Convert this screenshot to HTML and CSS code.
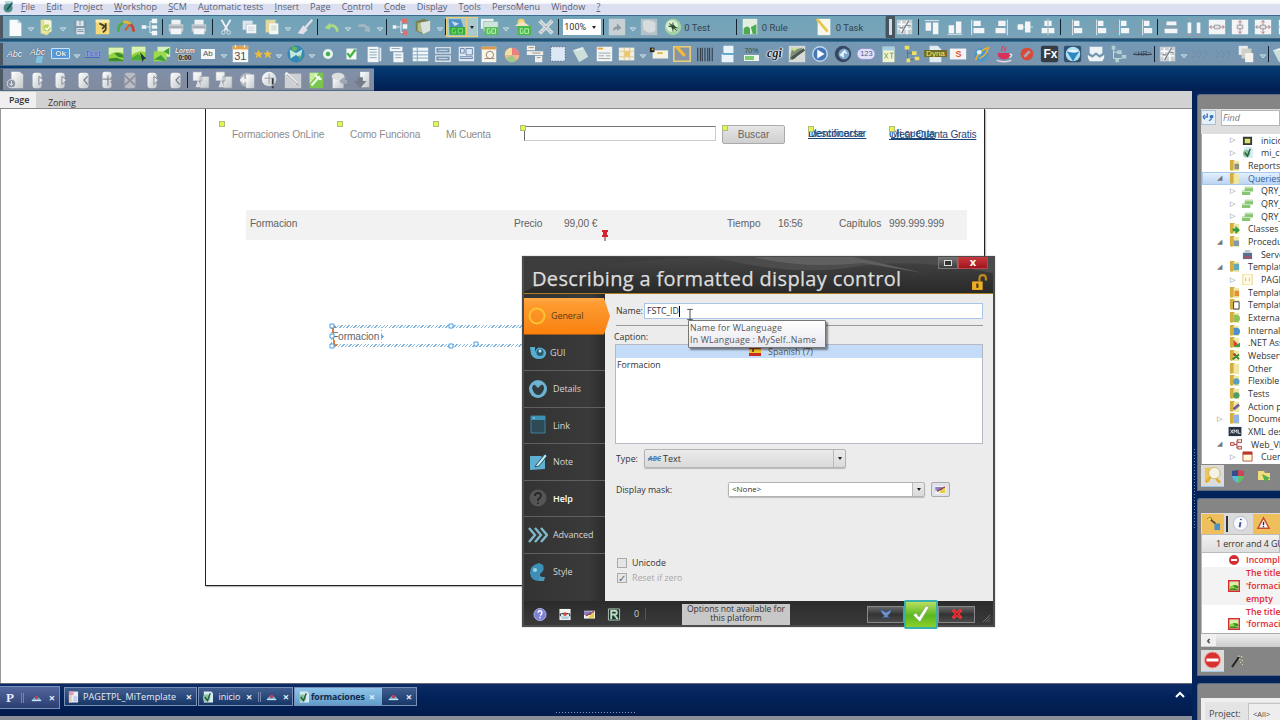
FILE: index.html
```html
<!DOCTYPE html>
<html lang="en">
<head>
<meta charset="utf-8">
<title>Page editor</title>
<link rel="stylesheet" href="styles.css">
</head>
<body>
<svg class="sprite" aria-hidden="true">
<defs>
<linearGradient id="gw" x1="0" y1="0" x2="1" y2="1"><stop offset="0" stop-color="#fff"/><stop offset="1" stop-color="#c3c8cc"/></linearGradient>
</defs>
<symbol id="new" viewBox="0 0 22 22"><path d="M5 3h9l4 4v14H5z" fill="#f7fbfd"/><path d="M14 3v4h4z" fill="#bcd0da"/></symbol>
<symbol id="open" viewBox="0 0 22 22"><path d="M4 3h11v13l-4 4-7-2z" fill="#e9df91"/><path d="M8 3l8 1v12l-8 1z" fill="#f3f5dd"/><circle cx="11" cy="12" r="4" fill="#b7d35d"/><path d="M9 12l2 2 4-5" stroke="#fff" stroke-width="1.5" fill="none"/></symbol>
<symbol id="save" viewBox="0 0 22 22"><path d="M4 4h14v14H4z" fill="#7c97aa"/><path d="M7 4h8v6H7zM7 12h9v7H7z" fill="#dce6ec"/><path d="M11 4v5M8 14h7M8 16h7" stroke="#7991a1"/></symbol>
<symbol id="proj" viewBox="0 0 22 22"><path d="M3 3h15v16H3z" fill="#f4d976"/><path d="M3 3h15v3H3z" fill="#f9efb4"/><path d="M7 7l6 3-3 3M14 7v7l-3 3" stroke="#47412b" stroke-width="2" fill="none"/></symbol>
<symbol id="gauge" viewBox="0 0 22 22"><path d="M3 16a8 8 0 0 1 5-10" stroke="#54a947" stroke-width="3" fill="none"/><path d="M8 6q4-2 8 2" stroke="#e0b83c" stroke-width="3" fill="none"/><path d="M16 8q4 4 3 8" stroke="#c94334" stroke-width="3" fill="none"/><path d="M10 15l5-7" stroke="#d15b2d" stroke-width="2"/></symbol>
<symbol id="org" viewBox="0 0 22 22"><path d="M8 11h4M12 5v12M12 5h3M12 17h3" stroke="#e6f0f5" fill="none"/><path d="M3 9h5v4H3zM14 2h6v5h-6zM14 9h6v4h-6zM14 15h6v5h-6z" fill="#f2f7fa"/></symbol>
<symbol id="print" viewBox="0 0 22 22"><path d="M6 3h10v6H6z" fill="#eef1f3"/><path d="M3 8h16v8H3z" fill="#c3cbd0"/><path d="M5 13h12v6H5z" fill="#f2f4f5"/><path d="M4 11h14" stroke="#84919a"/></symbol>
<symbol id="cut" viewBox="0 0 22 22"><path d="M6 3l7 12M16 3L9 15" stroke="#eef2f4" stroke-width="2"/><circle cx="8" cy="17" r="2" fill="none" stroke="#dbe3e7"/><circle cx="14" cy="17" r="2" fill="none" stroke="#dbe3e7"/></symbol>
<symbol id="copy" viewBox="0 0 22 22"><path d="M4 4h11v10H4z" fill="#dce6ec"/><path d="M8 8h11v10H8z" fill="#f7fafb" stroke="#9fb3bf" stroke-width=".6"/><path d="M10 11h7M10 13h7M10 15h7" stroke="#b8c7d0" stroke-width=".8"/></symbol>
<symbol id="paste" viewBox="0 0 22 22"><path d="M4 3h11v14H4z" fill="#e1d99d"/><path d="M8 7h10v12H8z" fill="#f5f7f3"/><path d="M10 10h6M10 12h6M10 14h6" stroke="#bcc7bc" stroke-width=".8"/></symbol>
<symbol id="brush" viewBox="0 0 22 22"><path d="M19 3l-8 9" stroke="#e6e0e6" stroke-width="2.5"/><path d="M9 9l5 5-5 5-6-1z" fill="#e3dfe8"/></symbol>
<symbol id="undo" viewBox="0 0 22 22"><path d="M17 16q-1-8-9-6" stroke="#a9dc80" stroke-width="3" fill="none"/><path d="M3 12l6-6v8z" fill="#a9dc80"/></symbol>
<symbol id="redo" viewBox="0 0 22 22"><path d="M5 10q8-3 10 4" stroke="#a3b7c3" stroke-width="3" fill="none"/><path d="M18 17l-7-2 6-5z" fill="#a3b7c3"/></symbol>
<symbol id="tree" viewBox="0 0 22 22"><path d="M7 11h5M12 5v12h3M12 5h3" stroke="#eef" fill="none"/><path d="M3 9h4v4H3zM14 8h5v5h-5z" fill="#f2f4f6"/><path d="M13 2h6v5h-6zM14 15h5v5h-5z" fill="#df6f68"/></symbol>
<symbol id="box" viewBox="0 0 22 22"><path d="M3 5l9-3 7 3v10l-8 4-8-4z" fill="#73814d"/><path d="M5 6l6 2v10l-6-3z" fill="#b5bd91"/><path d="M8 6l11-2v11l-8 4z" fill="#dae2df"/></symbol>
<symbol id="go" viewBox="0 0 22 22"><path d="M2 2h14l3 9-5 4H3z" fill="#4e91c6"/><path d="M5 4l9 3-5 3z" fill="#c2def3"/><path d="M3 11h18v9H3z" fill="#2fab36"/><path d="M10 13H6v5h4v-3M13 13h5v5h-5z" stroke="#8be588" fill="none"/></symbol>
<symbol id="gow" viewBox="0 0 22 22"><path d="M1 2h14v11H1z" fill="#e6f0f1"/><path d="M4 5h16v11H4z" fill="#cfe3dc" stroke="#80b3a4" stroke-width=".6"/><path d="M5 11h15v9H5z" fill="#58bd59"/><path d="M11 13H8v5h3v-3M13 13h4v5h-4z" stroke="#c4f3bd" fill="none"/></symbol>
<symbol id="goh" viewBox="0 0 22 22"><circle cx="9" cy="6" r="4" fill="#f1d36c"/><path d="M2 10l8-6 8 6" fill="#eee4c0"/><path d="M5 10h15v10H5z" fill="#47ba47"/><path d="M11 13H8v5h3v-3M13 13h4v5h-4z" stroke="#c4f3bd" fill="none"/></symbol>
<symbol id="x" viewBox="0 0 22 22"><path d="M4 4l14 14M18 4L4 18" stroke="#d5dadd" stroke-width="4.500"/><path d="M4 4l14 14M18 4L4 18" stroke="#90a5b0" stroke-width="1" stroke-dasharray="2"/></symbol>
<symbol id="gbox" viewBox="0 0 22 22"><rect x="2" y="2" width="18" height="18" rx="1" fill="#c7d0d5"/><path d="M7 15v-3l4-2V7l5 5-5 3v-2z" fill="#8e9b9f"/></symbol>
<symbol id="gcirc" viewBox="0 0 22 22"><path d="M2 2h18v18H2z" fill="#b3c1c9"/><path d="M4 5q6-4 14 1v9q-6 5-13-1z" fill="#d7dcde"/></symbol>
<symbol id="test" viewBox="0 0 22 22"><circle cx="11" cy="11" r="9" fill="#a3d3a3"/><circle cx="10" cy="10" r="6.500" fill="#dff0da"/><path d="M11 6v10M6 10l10 2M7 7l8 8" stroke="#345b36" stroke-width="1.200"/><path d="M9 8l5 2-4 4z" fill="#294d2e"/></symbol>
<symbol id="rule" viewBox="0 0 22 22"><path d="M3 2h16v17H3z" fill="#e2eee0"/><path d="M4 13q4-5 7 0v6H4zM12 11l6-3v11h-4z" fill="#4cab51"/></symbol>
<symbol id="task" viewBox="0 0 22 22"><path d="M4 2h14v18H4z" fill="#f8f7ed"/><path d="M3 2l12 14" stroke="#e8c64d" stroke-width="3"/></symbol>
<symbol id="grid" viewBox="0 0 22 22"><path d="M2 3h17v16H2z" fill="#c9d0d5"/><path d="M3 8h15M3 13h15M7 4v15M13 4v15" stroke="#fff" stroke-width="1.500"/><path d="M7 18L15 4M5 12h4M12 9h5" stroke="#777f87" stroke-width="1.200"/></symbol>
<symbol id="at" viewBox="0 0 22 22"><path d="M3 4h16" stroke="#e8eef2"/><path d="M4 6h6v9H4zM12 6h6v13h-6z" fill="#f3f5f7"/></symbol>
<symbol id="ab" viewBox="0 0 22 22"><path d="M3 19h16" stroke="#e8eef2"/><path d="M4 9h6v9H4zM12 5h6v13h-6z" fill="#f3f5f7"/></symbol>
<symbol id="al" viewBox="0 0 22 22"><path d="M4 3v17" stroke="#e8eef2"/><path d="M6 4h8v6H6zM6 12h12v6H6z" fill="#f3f5f7"/></symbol>
<symbol id="ar" viewBox="0 0 22 22"><path d="M18 3v17" stroke="#e8eef2"/><path d="M8 4h8v6H8zM5 12h11v6H5z" fill="#f3f5f7"/></symbol>
<symbol id="ac" viewBox="0 0 22 22"><path d="M2 11h18" stroke="#d8e1e7"/><path d="M3 8h6v6H3zM11 5h6v12h-6z" fill="#f3f5f7"/></symbol>
<symbol id="am" viewBox="0 0 22 22"><path d="M11 2v18" stroke="#d8e1e7"/><path d="M7 4h8v6H7zM4 12h14v6H4z" fill="#f3f5f7"/><path d="M11 3v16" stroke="#9aa9b4"/></symbol>
<symbol id="as" viewBox="0 0 22 22"><path d="M3 5h5M3 10h5M3 16h5" stroke="#a78d93" stroke-dasharray="1.500 1"/><path d="M9.500 3v17" stroke="#e8eef2"/><path d="M11 4h6v6h-6zM11 12h9v6h-9z" fill="#f3f5f7"/></symbol>
<symbol id="sw" viewBox="0 0 22 22"><path d="M6 5h11v4H6zM4 13h14v5H4z" fill="#f3f5f7"/><path d="M1 6h5M17 6h4M1 11h20" stroke="#b28d91" stroke-dasharray="2 1"/></symbol>
<symbol id="sh" viewBox="0 0 22 22"><path d="M4 6h4v12H4zM14 6h4v12h-4z" fill="#f3f5f7"/><path d="M4 3h4M14 3h4M4 20h4M14 20h4" stroke="#bf9095"/></symbol>
<symbol id="szw" viewBox="0 0 22 22"><path d="M2 3h18v16H2z" fill="#f2f4f6"/><path d="M3 11h16M5 9l-2 2 2 2M17 9l2 2-2 2" stroke="#ad767a" fill="none"/><path d="M8 9h6v4H8z" fill="#e6e4e4" stroke="#929ba4"/></symbol>
<symbol id="szh" viewBox="0 0 22 22"><path d="M2 3h18v16H2z" fill="#f2f4f6"/><path d="M11 4v14M9 6l2-2 2 2M9 16l2 2 2-2" stroke="#ad767a" fill="none"/><path d="M8 9h6v4H8z" fill="#e6e4e4" stroke="#929ba4"/></symbol>
<symbol id="sz" viewBox="0 0 22 22"><path d="M2 3h18v16H2z" fill="#f2f4f6"/><path d="M3 11h16M11 4v14M5 9l-2 2 2 2M17 9l2 2-2 2M9 6l2-2 2 2M9 16l2 2 2-2" stroke="#ad767a" fill="none"/><path d="M8 9h6v4H8z" fill="#e6e4e4" stroke="#929ba4"/></symbol>
<symbol id="pic" viewBox="0 0 22 22"><path d="M3 4h16v15H3z" fill="#94d43e"/><path d="M3 4h16v6q-8-3-16 2z" fill="#daf2b0"/><path d="M9 10q5-1 10 2v3l-6-1zM3 16l9-1 7 3v1H3z" fill="#3b8b31"/></symbol>
<symbol id="picc" viewBox="0 0 22 22"><path d="M3 3h15v15H3z" fill="#94d43e"/><path d="M3 3h15v6q-7-3-15 3z" fill="#daf2b0"/><path d="M3 15l7-4 8 7H3z" fill="#4ea937"/><path d="M12 9l7 7-3 1-1 3z" fill="#23343a"/></symbol>
<symbol id="pics" viewBox="0 0 22 22"><path d="M6 3h14v11H6z" fill="#d8efc0"/><path d="M2 8h14v11H2z" fill="#9ed94c"/><path d="M2 17l8-5 6 7zM13 8l6-4v8z" fill="#3fa03a"/></symbol>
<symbol id="cal" viewBox="0 0 22 22"><path d="M3 2h17v18H3z" fill="#fbf9f5"/><path d="M3 2h17v4H3z" fill="#e2a24b"/><path d="M6 1v3M16 1v3" stroke="#fff"/></symbol>
<symbol id="star" viewBox="0 0 22 22"><path d="M6 6l1.500 3.500H11L8.500 12l1 4L6 13.500 3 16l1-4-3-2.500h3.600zM16 6l1.500 3.500H21L18.500 12l1 4L16 13.500 13 16l1-4-2.500-2.500h3.100z" fill="#eabd42"/></symbol>
<symbol id="globe" viewBox="0 0 22 22"><circle cx="11" cy="11" r="9.500" fill="#3687b5"/><path d="M4 6l7 4 7-4-2 9-5-3-6 4z" fill="#bfe8dc"/><path d="M7 2l6 2-2 4-5-1zM14 13l4-1-3 6z" fill="#63b45e"/></symbol>
<symbol id="radio" viewBox="0 0 22 22"><circle cx="11" cy="11" r="5.500" fill="#e3f5ec"/><circle cx="11" cy="11" r="2.500" fill="#46ae4b"/></symbol>
<symbol id="chk" viewBox="0 0 22 22"><path d="M6 5h11v12H6z" fill="#f2f8f2"/><path d="M7 10l3 4 6-8" stroke="#43b345" stroke-width="2.500" fill="none"/></symbol>
<symbol id="list" viewBox="0 0 22 22"><path d="M4 3h12v17H4z" fill="#f1f5f8"/><path d="M6 6h8M6 9h8M6 12h8M6 15h8" stroke="#8aa3b5"/><path d="M18 4v15" stroke="#e2ebf0" stroke-width="2"/></symbol>
<symbol id="combo" viewBox="0 0 22 22"><path d="M3 3h14v5H3zM7 9h11v11H7z" fill="#f1f5f8"/><path d="M5 5h9M9 12h7M9 15h7" stroke="#8aa3b5"/></symbol>
<symbol id="table" viewBox="0 0 22 22"><path d="M3 4h17v15H3z" fill="#eff6fa"/><path d="M3 8h17M3 12h17M3 15.500h17M8 4v15" stroke="#7fa2bc"/></symbol>
<symbol id="rows" viewBox="0 0 22 22"><path d="M3 4h16v6H3zM3 13h16v6H3z" fill="none" stroke="#d7e1ea" stroke-width="1.500"/><path d="M6 7h10M6 16h10" stroke="#d7e1ea"/></symbol>
<symbol id="form" viewBox="0 0 22 22"><path d="M3 3h17v16H3z" fill="#dfe8f1"/><path d="M5 5h4v5H5zM11 5h7v7h-7zM5 14h13v2H5z" fill="none" stroke="#6480a4"/></symbol>
<symbol id="sched" viewBox="0 0 22 22"><path d="M3 3h16v17H3z" fill="#f7f4ea"/><path d="M3 3h16v3H3z" fill="#de994b"/><circle cx="12" cy="12" r="4" fill="none" stroke="#947965"/><path d="M6 16h11" stroke="#9f836c"/></symbol>
<symbol id="pie" viewBox="0 0 22 22"><circle cx="11" cy="12" r="8" fill="#f3b58b"/><path d="M11 12V4a8 8 0 0 0-8 8z" fill="#f1dea0"/><path d="M11 12L4 16q6 7 12 2z" fill="#9dcb88"/><path d="M11 12V4q7 0 8 8z" fill="#e9807f"/></symbol>
<symbol id="menu" viewBox="0 0 22 22"><path d="M2 2h9v5H2zM2 8h18v4H2zM11 13h8v7h-8z" fill="#f0eee9"/><path d="M4 4h6M8 10h9M13 15h4" stroke="#a18d7b"/></symbol>
<symbol id="dash" viewBox="0 0 22 22"><path d="M3 3h16v16H3z" fill="#dce8f3" stroke="#44597d" stroke-dasharray="1.500"/></symbol>
<symbol id="poly" viewBox="0 0 22 22"><path d="M2 7l11-4 6 11-10 6z" fill="#cddfda"/><path d="M5 7l8-2" stroke="#fff"/></symbol>
<symbol id="win" viewBox="0 0 22 22"><path d="M3 3h17v16H3z" fill="#f4f5f1"/><path d="M4 5h6" stroke="#e6a348" stroke-width="2"/><path d="M5 10h13M5 13h6M13 13h5M5 16h13" stroke="#8ca2b5"/></symbol>
<symbol id="tab" viewBox="0 0 22 22"><path d="M2 4h17v14H2z" fill="#f4efdc"/><path d="M8 8h6v6H8z" fill="#f0c65f"/><path d="M2 8h17M2 14h17M8 4v14M14 4v14" stroke="#dfc78e"/></symbol>
<symbol id="fld" viewBox="0 0 22 22"><path d="M4 7h17v9H4z" fill="#f5f3de"/><path d="M1 4h5v5H1z" fill="#222"/><path d="M3 6h2M9 10h6" stroke="#d9b548" stroke-width="2"/></symbol>
<symbol id="edit" viewBox="0 0 22 22"><path d="M2 3h18v16H2z" fill="#8a94a4" stroke="#e9cd78" stroke-width="1.800"/><path d="M5 3l9 10" stroke="#f3bc37" stroke-width="3.500"/></symbol>
<symbol id="bar" viewBox="0 0 22 22"><path d="M3 4v15M6 4v15M8 4v15M11 4v15M14 4v15M16 4v15M19 4v15" stroke="#38424f" stroke-width="1.300"/></symbol>
<symbol id="pgs" viewBox="0 0 22 22"><path d="M6 2h11v8H6zM4 11h13v9H4z" fill="#e9f4fa"/><path d="M5 11h13" stroke="#5ea6cb" stroke-width="2"/></symbol>
<symbol id="tool" viewBox="0 0 22 22"><path d="M2 2h18v18H2z" fill="#d7dbd8"/><path d="M5 7l12-3-8 12-6 2z" fill="#7d8f76"/><path d="M19 6L5 16" stroke="#49554f" stroke-width="3"/><path d="M5 4l3 3 4-3" stroke="#c5dc83" stroke-width="2" fill="none"/></symbol>
<symbol id="play" viewBox="0 0 22 22"><circle cx="11" cy="11" r="8" fill="#4776b8" stroke="#c3d9ee" stroke-width="1.500"/><path d="M8 6l8 5-8 5z" fill="#fff"/></symbol>
<symbol id="nav" viewBox="0 0 22 22"><circle cx="11" cy="11" r="9" fill="#37475f"/><circle cx="12" cy="11" r="6" fill="#79a5cb"/><path d="M7 12l6-6 3 5-4-1v5z" fill="#e9f1f8"/></symbol>
<symbol id="ovl" viewBox="0 0 22 22"><rect x="1" y="5" width="20" height="12" rx="6" fill="#e0e3f7" stroke="#8f8dcc"/></symbol>
<symbol id="xls" viewBox="0 0 22 22"><path d="M4 3h13v17H4z" fill="#f0f2d1"/><path d="M4 3h13v4H4z" fill="#a6cfe2"/><path d="M6 10l4 6M10 10l-4 6M12 10h4M14 10v6" stroke="#74a254"/></symbol>
<symbol id="hier" viewBox="0 0 22 22"><path d="M6 5v12h8M6 10h6" stroke="#5c737b" fill="none"/><path d="M3 2h5v4H3zM11 8h5v4h-5zM14 14h5v4h-5zM5 16h4v4H5z" fill="#f1df61"/></symbol>
<symbol id="blank" viewBox="0 0 22 22"><path d="M5 2h9l4 4v14H5z" fill="#deecf0"/></symbol>
<symbol id="sred" viewBox="0 0 22 22"><path d="M2 5h18v12H2z" fill="#f5f4f3"/></symbol>
<symbol id="sat" viewBox="0 0 22 22"><circle cx="11" cy="12" r="7.500" fill="#4a98cd"/><path d="M5 18Q8 7 19 4q-2 9-10 12" stroke="#e4ae36" stroke-width="1.800" fill="none"/><circle cx="9" cy="9" r="2.500" fill="#e3f2ea"/></symbol>
<symbol id="cup" viewBox="0 0 22 22"><path d="M4 10h14q0 7-7 7t-7-7z" fill="#d8325c"/><path d="M3 18q8 3 16 0M17 11q5 0 0 4" stroke="#eed9e2" stroke-width="1.500" fill="none"/><path d="M9 8q-2-3 2-6M12 8q-1-3 2-4" stroke="#d5445f" stroke-width="1.500" fill="none"/></symbol>
<symbol id="rc" viewBox="0 0 22 22"><circle cx="11" cy="11" r="7" fill="#d94935"/><path d="M8 14l6-6" stroke="#a8a6b0" stroke-width="3"/></symbol>
<symbol id="blk" viewBox="0 0 22 22"><rect x="1" y="2" width="19" height="18" rx="2" fill="#353c46"/></symbol>
<symbol id="gem" viewBox="0 0 22 22"><rect x="1" y="2" width="19" height="18" rx="2" fill="#31536f"/><circle cx="11" cy="11" r="8" fill="#aedff3"/><path d="M4 8h14l-7 11z" fill="#2f86c0"/><path d="M4 8q7-4 14 0-5 3-14 0z" fill="#e4f5fa"/></symbol>
<symbol id="brk" viewBox="0 0 22 22"><path d="M4 3h14v7l-3 2-4-3-4 3-3-2zM2 12l5 3 4-3 4 3 5-3v3l-2 4H4l-2-4z" fill="#f0f3f5"/></symbol>
<symbol id="hgr" viewBox="0 0 22 22"><path d="M5 3v13h9M5 9h7" stroke="#d0e3e7" fill="none"/><path d="M3 2h4v4H3zM9 7h5v4H9zM14 12h5v4h-5zM7 16h4v4H7z" fill="#b3d0d1"/></symbol>
<symbol id="faint" viewBox="0 0 22 22"><path d="M3 7l4 4-4 4M9 7l4 4-4 4M15 7l4 4-4 4" stroke="#657e94" fill="none" stroke-dasharray="1.500"/></symbol>
<symbol id="stack" viewBox="0 0 22 22"><path d="M3 2h10v10H3z" fill="#e9ebec"/><path d="M6 5h11v11H6z" fill="#ced0c5"/><path d="M10 10h9v10h-9z" fill="#f3f2ec"/></symbol>
<symbol id="g1" viewBox="0 0 22 22"><path d="M7 2h9l4 3v15H7z" fill="url(#gw)"/><circle cx="7" cy="15" r="4.500" fill="#878f9c" stroke="#dfe2e5"/><path d="M7 12v5M5 15l2 2 2-2" stroke="#eef" fill="none"/></symbol>
<symbol id="g2" viewBox="0 0 22 22"><rect x="5" y="3" width="10" height="17" rx="3" fill="url(#gw)"/><path d="M12 7l5 4-5 5z" fill="#e8e9ea" stroke="#7b8491"/></symbol>
<symbol id="g3" viewBox="0 0 22 22"><rect x="5" y="3" width="11" height="17" rx="3" fill="url(#gw)"/><path d="M15 7l-4 4 4 5" fill="none" stroke="#727a86" stroke-width="1.300"/></symbol>
<symbol id="g3b" viewBox="0 0 22 22"><rect x="6" y="2" width="10" height="18" rx="3" fill="url(#gw)"/><path d="M6 10h11M12 6v11M15 8l3 3-3 3" fill="none" stroke="#8b919b" stroke-width="1.400"/></symbol>
<symbol id="g4" viewBox="0 0 22 22"><rect x="5" y="3" width="12" height="17" rx="3" fill="#b9bdc3"/><path d="M5 6l12 11M17 6L5 17" stroke="#8b919b" stroke-width="2"/></symbol>
<symbol id="g5" viewBox="0 0 22 22"><path d="M2 2h10v10H2zM10 7h10v13H10z" fill="url(#gw)" stroke="#878e98" stroke-width=".7"/><path d="M5 19l3-9 3 9" fill="#dadce0"/></symbol>
<symbol id="g6" viewBox="0 0 22 22"><circle cx="11" cy="11" r="8" fill="#aeb3ba"/><path d="M10 5h9v15h-9z" fill="url(#gw)"/><path d="M3 11l5-5v4h5v3H8v3z" fill="#f0f1f2"/></symbol>
<symbol id="g7" viewBox="0 0 22 22"><circle cx="10" cy="10" r="8" fill="url(#gw)"/><path d="M5 9h10M10 4v11" stroke="#969da5"/><path d="M14 9v7M14 18v2" stroke="#313742" stroke-width="2"/></symbol>
<symbol id="g8" viewBox="0 0 22 22"><path d="M2 4h18v16H2z" fill="#cdd0d3"/><path d="M3 3l12 12" stroke="#f3f3f3" stroke-width="3"/><path d="M4 5l13 12" stroke="#828991"/></symbol>
<symbol id="g9" viewBox="0 0 22 22"><path d="M4 3h15v17H4z" fill="#79c54e"/><path d="M4 3h10L4 15z" fill="#c4eda0"/><path d="M6 17l9-10M10 5q3 5 7 5" stroke="#effbe5" stroke-width="2.500" fill="none"/></symbol>
<symbol id="g10" viewBox="0 0 22 22"><path d="M4 7h12v13H4z" fill="url(#gw)"/><ellipse cx="10" cy="7" rx="7" ry="4" fill="#dcdee0"/><path d="M11 12l7-5v4h2v4h-6z" fill="#a2a8af"/></symbol>
<symbol id="g11" viewBox="0 0 22 22"><path d="M9 2h10v17H9z" fill="url(#gw)"/><path d="M2 12h4V8h6v4h4l-7 8z" fill="#747c86"/></symbol>
<symbol id="tri" viewBox="0 0 10 22"><path d="M1.500 12h7L5 16z" fill="#8fb5c6" stroke="#ddebf3" stroke-width=".9"/></symbol>
<symbol id="f" viewBox="0 0 12 12"><path d="M1 0h5v10l-3 2-2-1z" fill="#d4ad3e"/><path d="M5 1h6v11H5z" fill="#efe7a5"/></symbol>
<symbol id="pin" viewBox="0 0 12 10"><path d="M0 8.500l5-5h2l5 5z" fill="#7eb4dc"/><path d="M1 8.500h10" stroke="#dff" stroke-width="1"/><circle cx="6" cy="5" r="2" fill="#ba3d50"/></symbol>
<symbol id="pg" viewBox="0 0 12 12"><path d="M2 0h8l2 2v10H2z" fill="#d9ecf2"/><circle cx="5" cy="7" r="4" fill="#8cc3a0"/><path d="M3 6l3 4 3-8" stroke="#1d5c3c" stroke-width="1.500" fill="none"/></symbol>
<symbol id="tpl" viewBox="0 0 12 12"><path d="M1 0h10v12H1z" fill="#e9edf5"/><path d="M1 0h5v4H1z" fill="#e09bb0"/><path d="M1 4h3v8H1z" fill="#e6c8b4"/><path d="M6 6h4M6 8h4M6 10h4" stroke="#9fb5d8"/></symbol>
<symbol id="swatch" viewBox="0 0 12 9"><path d="M0 0h12v9H0z" fill="#f4f4f4"/><path d="M0 1h8v4H0z" fill="#8a7fca"/><path d="M11 2v6H4z" fill="#e7cf2f"/><path d="M2 6l9-5" stroke="#a13d38" stroke-width="1.500"/></symbol>
</svg>

<nav class="menubar">
<svg class="logo" viewBox="0 0 12 12"><path d="M3 0h8v10H3z" fill="#b4d6dc"/><circle cx="6" cy="7" r="4.500" fill="#4e8f83"/><path d="M5 9l5-7" stroke="#274f63" stroke-width="2"/></svg>
<span><u>F</u>ile</span><span><u>E</u>dit</span><span><u>P</u>roject</span><span><u>W</u>orkshop</span><span><u>S</u>CM</span><span>A<u>u</u>tomatic tests</span><span><u>I</u>nsert</span><span>Pa<u>g</u>e</span><span>C<u>o</u>ntrol</span><span><u>C</u>ode</span><span>Displ<u>a</u>y</span><span>T<u>o</u>ols</span><span>PersoMenu</span><span>Wi<u>n</u>dow</span><span><u>?</u></span>
</nav>

<div class="toolbar first">
<i class="grip"></i>
<svg class="ic"><use href="#new"/></svg><svg class="dd"><use href="#tri"/></svg><svg class="ic"><use href="#open"/></svg><svg class="dd"><use href="#tri"/></svg><svg class="ic"><use href="#save"/></svg><svg class="ic"><use href="#proj"/></svg><svg class="ic"><use href="#gauge"/></svg><svg class="ic"><use href="#org"/></svg><i class="sep"></i>
<svg class="ic"><use href="#print"/></svg><svg class="ic"><use href="#print"/></svg><i class="sep"></i>
<svg class="ic"><use href="#cut"/></svg><svg class="ic"><use href="#copy"/></svg><svg class="ic"><use href="#paste"/></svg><svg class="dd"><use href="#tri"/></svg><svg class="ic"><use href="#brush"/></svg><i class="sep"></i>
<svg class="ic"><use href="#undo"/></svg><svg class="dd"><use href="#tri"/></svg><svg class="ic"><use href="#redo"/></svg><svg class="dd"><use href="#tri"/></svg><i class="sep"></i>
<svg class="ic"><use href="#tree"/></svg><svg class="ic"><use href="#box"/></svg><svg class="dd"><use href="#tri"/></svg><i class="sep"></i>
<span class="hot"><svg class="ic"><use href="#go"/></svg><b></b></span>
<svg class="ic"><use href="#gow"/></svg><svg class="dd"><use href="#tri"/></svg><svg class="ic"><use href="#goh"/></svg><svg class="ic"><use href="#x"/></svg><i class="sep"></i>
<span class="zoom">100%<b></b></span><i class="sep"></i>
<svg class="ic"><use href="#gbox"/></svg><svg class="dd"><use href="#tri"/></svg><svg class="ic"><use href="#gcirc"/></svg>
<span class="counter"><svg class="ic"><use href="#test"/></svg>0 Test</span><i class="sep"></i>
<span class="counter"><svg class="ic"><use href="#rule"/></svg>0 Rule</span>
<span class="counter last"><svg class="ic"><use href="#task"/></svg>0 Task</span>
<i class="grip wide"></i>
<svg class="ic"><use href="#grid"/></svg><i class="sep"></i>
<svg class="ic"><use href="#at"/></svg><svg class="ic"><use href="#ab"/></svg><svg class="ic"><use href="#al"/></svg><svg class="ic"><use href="#ar"/></svg><svg class="ic"><use href="#ac"/></svg><svg class="ic"><use href="#am"/></svg><i class="sep"></i>
<svg class="ic"><use href="#as"/></svg><svg class="ic"><use href="#as"/></svg><svg class="ic"><use href="#as"/></svg><svg class="ic"><use href="#as"/></svg><i class="sep"></i>
<svg class="ic"><use href="#sw"/></svg><svg class="ic"><use href="#sh"/></svg><svg class="ic"><use href="#szw"/></svg><svg class="ic"><use href="#szh"/></svg><svg class="ic"><use href="#sz"/></svg><svg class="ic"><use href="#sz"/></svg>
</div>

<div class="toolbar second">
<i class="grip"></i>
<em class="tx abc">Abc</em><em class="tx abc up">Abc</em><span class="tx"><b class="ok">Ok</b></span><svg class="dd"><use href="#tri"/></svg><span class="tx link">Text</span><svg class="ic"><use href="#pic"/></svg><svg class="ic"><use href="#picc"/></svg><svg class="ic"><use href="#pics"/></svg><span class="tx roll">Lorem<b>0:00</b></span><span class="tx"><b class="ab">Ab</b></span><svg class="dd"><use href="#tri"/></svg><span class="tx num"><svg class="ic"><use href="#cal"/></svg><b>31</b></span><svg class="ic"><use href="#star"/></svg><svg class="dd"><use href="#tri"/></svg><svg class="ic"><use href="#globe"/></svg><svg class="dd"><use href="#tri"/></svg><svg class="ic"><use href="#radio"/></svg><svg class="ic"><use href="#chk"/></svg><svg class="ic"><use href="#list"/></svg><svg class="ic"><use href="#combo"/></svg><svg class="ic"><use href="#table"/></svg><svg class="ic"><use href="#rows"/></svg><svg class="ic"><use href="#form"/></svg><svg class="ic"><use href="#sched"/></svg><svg class="ic"><use href="#pie"/></svg><svg class="ic"><use href="#menu"/></svg><svg class="ic"><use href="#dash"/></svg><svg class="ic"><use href="#poly"/></svg><svg class="ic"><use href="#win"/></svg><svg class="ic"><use href="#tab"/></svg><svg class="dd"><use href="#tri"/></svg><svg class="ic"><use href="#fld"/></svg><svg class="ic"><use href="#edit"/></svg><svg class="ic"><use href="#bar"/></svg><svg class="ic"><use href="#pgs"/></svg><span class="tx pct">70%<b></b></span><em class="tx cgi">cgi</em><svg class="ic"><use href="#tool"/></svg><svg class="ic"><use href="#play"/></svg><svg class="ic"><use href="#nav"/></svg><span class="tx num oval"><svg class="ic"><use href="#ovl"/></svg><b>123</b></span><svg class="ic"><use href="#xls"/></svg><svg class="ic"><use href="#hier"/></svg><span class="tx num dyn"><svg class="ic"><use href="#blank"/></svg><b>Dyna</b></span><span class="tx num ess"><svg class="ic"><use href="#sred"/></svg><b>S</b></span><svg class="ic"><use href="#sat"/></svg><svg class="ic"><use href="#cup"/></svg><svg class="ic"><use href="#rc"/></svg><span class="tx num fx"><svg class="ic"><use href="#blk"/></svg><b>Fx</b></span><svg class="ic"><use href="#gem"/></svg><svg class="ic"><use href="#brk"/></svg><svg class="ic"><use href="#hgr"/></svg><span class="tx hr">&lt;HR&gt;</span><i class="sep"></i><svg class="ic"><use href="#grid"/></svg><svg class="dd"><use href="#tri"/></svg><svg class="ic"><use href="#faint"/></svg><svg class="ic"><use href="#faint"/></svg><svg class="ic"><use href="#stack"/></svg><svg class="dd"><use href="#tri"/></svg><i class="sep"></i><svg class="ic"><use href="#poly"/></svg>
</div>

<div class="thirdrow"><div class="toolbar third">
<i class="grip"></i>
<svg class="ic"><use href="#g1"/></svg><svg class="ic"><use href="#g2"/></svg><svg class="ic"><use href="#g2"/></svg><svg class="ic"><use href="#g3"/></svg><svg class="ic"><use href="#g3b"/></svg><svg class="ic"><use href="#g4"/></svg><svg class="ic"><use href="#g2"/></svg><svg class="ic"><use href="#g3"/></svg><i class="sep"></i><svg class="ic"><use href="#g5"/></svg><svg class="ic"><use href="#g5"/></svg><svg class="ic"><use href="#g6"/></svg><svg class="ic"><use href="#g7"/></svg><svg class="ic"><use href="#g8"/></svg><svg class="ic"><use href="#g9"/></svg><svg class="ic"><use href="#g10"/></svg><svg class="ic"><use href="#g11"/></svg>
</div></div>

<main class="main">
<section class="left">
<div class="tabs"><span class="on">Page</span><span>Zoning</span></div>
<div class="canvas">
<div class="sheet"></div>
<i class="mark m1"></i><i class="mark m2"></i><i class="mark m3"></i>
<span class="t nav1">Formaciones OnLine</span><span class="t nav2">Como Funciona</span><span class="t nav3">Mi Cuenta</span>
<div class="search"></div><i class="mark m4"></i>
<div class="buscar">Buscar</div><i class="mark m5"></i>
<a class="t l1">Identificarse</a><a class="t l1">Desconectar</a><a class="t l2">Crear Cuenta Gratis</a><a class="t l3">Mi cuenta</a><i class="mark m6"></i><i class="mark m7"></i>
<div class="strip"></div>
<span class="t s1">Formacion</span><span class="t s2">Precio</span><span class="t s3">99,00 €</span><span class="t s4">Tiempo</span><span class="t s5">16:56</span><span class="t s6">Capítulos</span><span class="t s7">999.999.999</span>
<svg class="redpin" viewBox="0 0 8 12"><path d="M1 1h6v2H6v3h1v2H1V6h1V3H1z" fill="#d5222e"/><path d="M4 8v4" stroke="#7d222a"/></svg>
<div class="sel"><span>Formacion</span></div>
<svg class="handles" viewBox="0 0 200 26"><path d="M3 4h4M4 4v6M3 22h5M5 17v6" stroke="#e27b3e" stroke-width="2" fill="none"/><g fill="#fff" stroke="#4b9ee0"><path d="M1 1h4v4H1zM1 11h4v4H1zM1 21h4v4H1zM120 1h4v4h-4zM120 21h4v4h-4zM145 19h4v4h-4z"/></g><path d="M52 11v5l3-2.500z" fill="#4b9ee0"/><path d="M52.500 4v18" stroke="#8fc1ea" stroke-dasharray="1 2"/></svg>
</div>
<footer class="docs">
<div class="doc first"><b class="pp">P</b><i class="bars"></i><svg class="pn"><use href="#pin"/></svg><b>×</b></div>
<div class="doc d1"><svg class="pi"><use href="#tpl"/></svg><span>PAGETPL_MiTemplate</span><b>×</b></div>
<div class="doc d2"><svg class="pi"><use href="#pg"/></svg><span>inicio</span><b>×</b><i class="bars"></i><svg class="pn"><use href="#pin"/></svg><b>×</b></div>
<div class="doc d3"><div class="cur"><svg class="pi"><use href="#pg"/></svg><span>formaciones</span><b>×</b></div><svg class="pn"><use href="#pin"/></svg><b>×</b></div>
<svg class="chev" viewBox="0 0 10 8"><path d="M1 6l4-4 4 4" fill="none" stroke="#fff" stroke-width="2"/></svg>
</footer>
<div class="status"></div>
</section>

<aside class="right">
<section class="panel explorer">
<div class="find"><svg viewBox="0 0 15 15"><path d="M6 3v4H3M1 7l2.500-2.500M1 7l2.500 2.500M11 5v3q0 2-3 3" stroke="#3673bb" stroke-width="1.500" fill="none"/><path d="M9 5h4v3H9z" fill="#3673bb"/></svg><span>Find</span></div>
<div class="tree">
<p class="k2"><i>▷</i><svg viewBox="0 0 12 12"><path d="M1 2h10v9H1z" fill="#323c36"/><path d="M3 4h6v5H3z" fill="#e0df6f"/></svg>inicio</p>
<p class="k2"><i>▷</i><svg><use href="#pg"/></svg>mi_cuenta</p>
<p><i></i><svg viewBox="0 0 12 12"><use href="#f"/><path d="M6 4h5v6H6z" fill="#8e9085"/></svg>Reports</p>
<p class="on"><i>◢</i><svg><use href="#f"/></svg>Queries</p>
<p class="k2"><i>▷</i><svg viewBox="0 0 12 12"><path d="M3 2h9v5H3zM0 6h9v5H0z" fill="#87c572"/><path d="M3 3h9M0 7h9" stroke="#d9f0cb"/></svg>QRY_</p>
<p class="k2"><i>▷</i><svg viewBox="0 0 12 12"><path d="M3 2h9v5H3zM0 6h9v5H0z" fill="#87c572"/><path d="M3 3h9M0 7h9" stroke="#d9f0cb"/></svg>QRY_</p>
<p class="k2"><i>▷</i><svg viewBox="0 0 12 12"><path d="M3 2h9v5H3zM0 6h9v5H0z" fill="#87c572"/><path d="M3 3h9M0 7h9" stroke="#d9f0cb"/></svg>QRY_</p>
<p><i></i><svg viewBox="0 0 12 12"><use href="#f"/><path d="M4 6h3V3l5 5-5 4V9H4z" fill="#2c9c3c"/></svg>Classes</p>
<p><i>◢</i><svg viewBox="0 0 12 12"><use href="#f"/><path d="M5 5h6v6H5z" fill="#8299ad"/></svg>Procedures</p>
<p class="k2"><i></i><svg viewBox="0 0 12 12"><path d="M1 4h10v7H1z" fill="#59718f"/><path d="M3 1h6v3H3z" fill="#b9c7d2"/><path d="M3 9h6" stroke="#d4424c" stroke-width="2"/></svg>Server</p>
<p><i>◢</i><svg viewBox="0 0 12 12"><use href="#f"/><path d="M5 3h6v7H5z" fill="#62a9bc"/></svg>Templates</p>
<p class="k2"><i>▷</i><svg viewBox="0 0 12 12"><path d="M1 0h10v12H1z" fill="#fffce9" stroke="#eed367"/><path d="M4 4v4M8 4v4" stroke="#e8b74d"/></svg>PAGETPL</p>
<p><i></i><svg viewBox="0 0 12 12"><use href="#f"/><path d="M6 4h5v6H6z" fill="#e78d32"/></svg>Templates</p>
<p><i></i><svg viewBox="0 0 12 12"><use href="#f"/><path d="M5 3h6v8H5z" fill="#fff" stroke="#333"/></svg>Templates</p>
<p><i></i><svg viewBox="0 0 12 12"><use href="#f"/><path d="M5 3h3a4 4 0 0 1 0 8H5z" fill="#91c15d"/></svg>External</p>
<p><i></i><svg viewBox="0 0 12 12"><use href="#f"/><path d="M5 3h3a4 4 0 0 1 0 8H5z" fill="#4b91d2"/></svg>Internal</p>
<p><i></i><svg viewBox="0 0 12 12"><use href="#f"/><path d="M5 3l7 7H5z" fill="#db3e34"/><path d="M5 11h7V6z" fill="#37a44c"/></svg>.NET Assemblies</p>
<p><i></i><svg viewBox="0 0 12 12"><use href="#f"/><path d="M4 10l7-5M5 4l6 6" stroke="#31883c" stroke-width="2"/><circle cx="6" cy="5" r="1.500" fill="#be3c31"/></svg>Webservices</p>
<p><i></i><svg><use href="#f"/></svg>Other</p>
<p><i></i><svg viewBox="0 0 12 12"><use href="#f"/><circle cx="8" cy="7" r="3.500" fill="#57a1bd"/></svg>Flexible</p>
<p><i></i><svg viewBox="0 0 12 12"><use href="#f"/><circle cx="8" cy="8" r="3.500" fill="#4f9d64"/></svg>Tests</p>
<p><i></i><svg viewBox="0 0 12 12"><use href="#f"/><path d="M5 9l6-5" stroke="#725c9e" stroke-width="3"/></svg>Action plans</p>
<p><i>▷</i><svg viewBox="0 0 12 12"><use href="#f"/><path d="M5 2h6v9H5z" fill="#91b5e7"/></svg>Documents</p>
<p class="xml"><i></i><svg viewBox="0 0 14 12"><path d="M0 1h14v10H0z" fill="#273341"/><path d="M2 4l3 4M5 4L2 8M6 8V4l1.500 2L9 4v4M10.500 4v4H13" stroke="#edf0f2" fill="none"/></svg>XML desc.</p>
<p class="wide"><i>◢</i><svg viewBox="0 0 12 12"><path d="M4 6h3V2h3M7 6v4h3" stroke="#942f31" fill="none"/><path d="M0 4h4v3H0zM8 0h4v4H8zM8 8h4v3H8z" fill="#f3e1d8" stroke="#a94340"/></svg>Web_VI</p>
<p class="k2"><i>▷</i><svg viewBox="0 0 12 12"><path d="M1 1h10v10H1z" fill="#fff8da" stroke="#b94c3d"/><path d="M1 1h10v3H1z" fill="#b9392d"/></svg>Cuenta</p>
</div>
<div class="ptabs"><span class="on"><svg viewBox="0 0 20 18"><path d="M2 1h8l-3 15H2z" fill="#e9c75d"/><circle cx="12" cy="7" r="6" fill="#f4f4e6" stroke="#d6b55e"/><path d="M8 11l-5 6M14 13l4 4" stroke="#e7ad24" stroke-width="2.500"/></svg></span><svg viewBox="0 0 14 14"><path d="M1 2l6-1v6H1z" fill="#344c8c"/><path d="M7 1l6 1v5H7z" fill="#cb4355"/><path d="M1 7h6v7q-5-2-6-7z" fill="#57bce3"/><path d="M7 7h6q-1 5-6 7z" fill="#62bf63"/></svg><svg viewBox="0 0 14 14"><path d="M1 2h6l1 2h5v7H1z" fill="#f1dd7c"/><path d="M5 5l8 4-5 4z" fill="#51ae4e"/></svg></div>
</section>

<section class="panel errors">
<div class="etools"><span class="y"><svg viewBox="0 0 16 16"><path d="M1 3l4-2 2 5 4 3" fill="#f0e067" stroke="#a38123"/><path d="M9 8h6v7H9z" fill="#4a91c4"/><path d="M5 4l5 4" stroke="#614d38" stroke-width="2"/></svg></span><i></i><span class="inf"><svg viewBox="0 0 16 16"><circle cx="8" cy="8" r="7.500" fill="#f8f9fd" stroke="#b4bacd"/><path d="M8.600 3l-.2 1.500M8 6.500L7 12" stroke="#4055a1" stroke-width="2"/></svg></span><span class="y"><svg viewBox="0 0 16 16"><path d="M8 2l6 11H2z" fill="#fff" stroke="#c84c37" stroke-width="1.600"/><path d="M8 6v3.500M8 10.500V12" stroke="#333" stroke-width="1.500"/></svg></span></div>
<div class="ehead">1 error and 4 GUI</div>
<div class="elist">
<p><svg viewBox="0 0 12 12"><circle cx="6" cy="6" r="5" fill="#d42e31"/><path d="M3 6h6" stroke="#fff" stroke-width="2"/></svg>Incomplete</p>
<p class="alt"><s></s>The title</p>
<p class="alt"><svg viewBox="0 0 12 12"><use href="#pic"/><path d="M.7.7h10.600v10.600H.7z" fill="none" stroke="#d42e31" stroke-width="1.400"/></svg>'formaciones'</p>
<p class="alt"><s></s>empty</p>
<p><s></s>The title</p>
<p><svg viewBox="0 0 12 12"><use href="#pic"/><path d="M.7.7h10.600v10.600H.7z" fill="none" stroke="#d42e31" stroke-width="1.400"/></svg>'formaciones'</p>
</div>
<div class="hscroll"><b>‹</b></div>
<div class="ptabs"><span class="on"><svg viewBox="0 0 18 18"><circle cx="9" cy="9" r="8" fill="#d8312f" stroke="#e7a4a0"/><path d="M3 9h12" stroke="#fff" stroke-width="3"/></svg></span><svg viewBox="0 0 14 14"><path d="M1 13L8 3" stroke="#222" stroke-width="2"/><path d="M7 2l5 1M8 5l4 2M9 8l3 3" stroke="#e7e7a6" stroke-dasharray="1.500"/></svg></div>
</section>

<section class="panel project"><div class="prow">Project: <span>&lt;All&gt;</span></div></section>
</aside>
</main>

<div class="splitdots"></div>
<div class="sidedots"></div>

<div class="dialog">
<header>
<svg class="waves" viewBox="0 0 470 35" preserveAspectRatio="none"><path d="M0 35Q60 2 190 0H0z" fill="#3d3d3d"/><path d="M190 0q80 20 140 10T470 16V0z" fill="#4c4c4c"/><path d="M230 0q50 12 110 6l60 10-70-16z" fill="#606060"/></svg>
<h1>Describing a formatted display control</h1>
<div class="wbtn"><span><i></i></span><span class="close">x</span></div>
<svg class="lock" viewBox="0 0 16 16"><path d="M8 7V4q0-3 3-3t3 3v2" fill="none" stroke="#c28a1b" stroke-width="2"/><path d="M1 7h10v8H1z" fill="#edae25"/><path d="M6 9v4" stroke="#4a3511" stroke-width="2"/></svg>
</header>
<div class="dbody">
<ul class="side">
<li class="on"><svg viewBox="0 0 20 20"><circle cx="10" cy="10" r="7.500" fill="none" stroke="#fcc32c" stroke-width="2"/></svg>General</li>
<li class="gui"><svg viewBox="0 0 20 20"><path d="M2 5h5v5q2-6 7-4 5 2 4 6-1 5-7 5-6 0-8-5z" fill="#56adcf"/><circle cx="12" cy="10.500" r="3.500" fill="#2b596e"/><circle cx="12" cy="9" r="1.500" fill="#b8e5f4"/></svg>GUI</li>
<li><svg viewBox="0 0 20 20"><circle cx="10" cy="10" r="9" fill="#6cb4d2"/><path d="M4 9q1-4 3-3l3 3 3-3q3-1 3 4-2 6-6 6t-6-7z" fill="#333b3f"/></svg>Details</li>
<li><svg viewBox="0 0 20 20"><path d="M3 1h14v17H3z" fill="#2e4a57" stroke="#427f99"/><path d="M3 1h14v4H3z" fill="#3b91b4"/><path d="M5 3h2" stroke="#a9dced"/></svg>Link</li>
<li><svg viewBox="0 0 20 20"><path d="M2 4h11l4 4v9L2 18z" fill="#5fb0d0"/><path d="M8 13L17 2l2 2-8 10-4 1z" fill="#c9e8f2" stroke="#26566b" stroke-width="1"/></svg>Note</li>
<li class="bright"><svg viewBox="0 0 20 20"><circle cx="10" cy="10" r="8.500" fill="#555"/><path d="M7 8q0-3 3-3t3 2.500q0 2-3 4V13M10 14.500V16" stroke="#282828" stroke-width="1.800" fill="none"/></svg>Help</li>
<li><svg viewBox="0 0 20 20"><path d="M1 3l6 7-6 7M7 3l6 7-6 7M13 3l6 7-6 7" fill="none" stroke="#7fb9cb" stroke-width="2.400"/></svg>Advanced</li>
<li><svg viewBox="0 0 20 20"><path d="M11 1Q2 3 2 11q1 8 9 8 6-1 4-4-5-1-2-4 4-3 2-8z" fill="#3c90b6"/><circle cx="7" cy="8" r="2" fill="#9ed4e8"/><path d="M11 15h6l-1 4h-5z" fill="#4b98b7"/></svg>Style</li>
</ul>
<div class="form">
<div class="name"><label>Name:</label><div class="inp">FSTC_ID<i></i></div></div>
<hr>
<label class="cap">Caption:</label>
<div class="capbox"><div class="lang"><svg viewBox="0 0 12 9"><path d="M0 0h12v9H0z" fill="#c92b25"/><path d="M0 2h12v4H0z" fill="#f0c626"/><path d="M3 2h2v3H3z" fill="#8c4a1c"/></svg>Spanish (7)</div><p>Formacion</p></div>
<div class="type"><label>Type:</label><div class="drop"><em>ABC</em>Text<b></b></div></div>
<div class="mask"><label>Display mask:</label><div class="drop"><span>&lt;None&gt;</span><b></b></div><div class="mb"><svg viewBox="0 0 12 9"><use href="#swatch"/></svg></div></div>
<div class="check"><i></i>Unicode</div>
<div class="check off"><i>✓</i>Reset if zero</div>
</div>
</div>
<footer>
<svg viewBox="0 0 14 14"><circle cx="7" cy="7" r="6.500" fill="#7d82d9" stroke="#b2b7e5"/><path d="M5 5q0-2 2-2t2 2-2 3M7 9.500V11" stroke="#fff" stroke-width="1.500" fill="none"/></svg>
<svg viewBox="0 0 14 14"><path d="M1 1h12v12H1z" fill="#f4f4f2"/><path d="M2 9v-3M12 9V6M3 6h8" stroke="#30444e" stroke-width="1.300"/><path d="M3 9h8v3H3z" fill="#a9cfe0"/><circle cx="7" cy="6.500" r="2" fill="#d84643"/></svg>
<svg viewBox="0 0 12 9"><use href="#swatch"/></svg>
<svg viewBox="0 0 14 14"><path d="M1 1h12v12H1z" fill="#1c3927" stroke="#b1c9ba"/><path d="M4 12V3h4q2 0 2 2t-2 2H5M7 7l4 5" stroke="#c1d8c8" stroke-width="2" fill="none"/></svg>
<span class="zero">0</span>
<div class="opt">Options not available for<br>this platform</div>
<div class="btn"><svg viewBox="0 0 16 14"><path d="M1 1l7 4 7-4-2 5-3 3 2 3-4-1-4 1 2-3-3-3z" fill="#7192c6" stroke="#32517f"/></svg></div>
<div class="btn ok2"><svg viewBox="0 0 18 18"><path d="M1 10l3-2 3 4 7-11 3 1-9 15z" fill="#fff" stroke="#8da579" stroke-width=".7"/></svg></div>
<div class="btn"><svg viewBox="0 0 16 14"><path d="M3 2l10 10M13 2L3 12" stroke="#e73538" stroke-width="4"/><path d="M5 4l6 6M11 4l-6 6" stroke="#9a1518"/></svg></div>
<svg class="rs" viewBox="0 0 10 10"><path d="M1 9l8-8M4 9l5-5M7 9l2-2" stroke="#777"/></svg>
</footer>
<div class="tip">Name for WLanguage<br>In WLanguage : MySelf..Name</div>
<svg class="ibeam" viewBox="0 0 8 14"><path d="M1 1.500h6M4 1.500v11M1 12.500h6" stroke="#444"/></svg>
</div>
</body>
</html>
```

FILE: styles.css
```css
* { box-sizing: border-box; }
body {
  margin: 0; width: 1280px; height: 720px; overflow: hidden; position: relative;
  display: flex; flex-direction: column;
  font-family: "Open Sans", "Noto Sans", sans-serif; font-size: 9px; color: #444;
  background: #02245a;
}
p, ul, h1 { margin: 0; padding: 0; list-style: none; font-weight: normal; }
.sprite { position: absolute; width: 0; height: 0; }

.menubar {
  height: 15px; flex: none; display: flex; gap: 11.200px; align-items: center; padding: 0 0 2px 2px;
  background: linear-gradient(#fff, #f4f6fa 25%, #dcdff0 30%, #dde1f1);
  color: #5b5f74; font-size: 9px; white-space: nowrap;
}
.menubar .logo { width: 12px; height: 12px; margin-right: -4.300px; }
.menubar u { text-underline-offset: 1px; text-decoration-thickness: 1px; }

.toolbar { flex: none; display: flex; align-items: center; height: 25px; padding-top: 0; border-top: 1px solid #3e6e8e; border-bottom: 1px solid #48677e; overflow: hidden; white-space: nowrap; }
.toolbar.first { height: 24px; background: linear-gradient(#70a3b8, #7ba3b8); }
.toolbar.second { margin-top: 2px; background: linear-gradient(#7398b5, #7995ae); }
.toolbar.third { width: 374px; height: 23px; background: linear-gradient(#8090aa, #828a9d); border-color: #526a88; }
.thirdrow { flex: none; height: 25px; padding-top: 2px; background: linear-gradient(#033b73, #021e52); }
.first { box-shadow: 0 2px 0 #1e557d; }
.ic { width: 20px; height: 20px; flex: none; margin: 0 1.500px; }
.first .ic { margin: 0 1.600px; }
.dd { width: 8px; height: 18px; flex: none; margin: 0 .8px 0 .6px; }
.sep { width: 1px; height: 16px; background: #15212c; flex: none; margin: 0 1.300px 0 .3px; }
.first .sep { margin: 0 1.500px 0 1px; }
.grip { width: 3px; height: 22px; background: #4c5963; flex: none; }
.grip.wide { width: 9px; margin-right: -1px; border: 3px solid #46545f; background: #d5dde2; }
.hot { display: flex; align-items: center; width: 32px; height: 20px; border: 1px solid #f0cc73; background: #a9c9cd; margin: 0 0 0 -1.500px; flex: none; }
.first .hot .ic { margin: 0; width: 19px; }
.hot b { border-left: 1px solid #f0cc73; height: 18px; width: 11px; display: flex; align-items: center; justify-content: center; }
.zoom b { display: flex; }
.hot b::after, .zoom b::after, .drop b::after { content: ""; border: 2.500px solid transparent; border-top: 3px solid #222; border-bottom: 0; }
.zoom { width: 38px; height: 16px; background: #fff; color: #333; display: flex; align-items: center; justify-content: space-between; padding: 0 5px 0 1px; font: 9px "Roboto", sans-serif; flex: none; margin: 0 .5px 0 2.500px; }
.counter { display: flex; align-items: center; font: 9.500px "Roboto", sans-serif; color: #34434e; width: 74px; flex: none; }
.counter.last { width: 73px; border-right: 1px solid #56829a; }
.tx { width: 23px; height: 20px; flex: none; display: flex; align-items: center; justify-content: center; font: bold 8px "Liberation Sans", sans-serif; color: #f4f8fc; text-shadow: 0 0 1px #223; position: relative; }
.abc { font-style: italic; font-weight: normal; color: #fff; font-size: 9px; }
.up { padding-bottom: 4px; background: linear-gradient(100deg, transparent 45%, #7fc0df 45% 70%, transparent 70%) 0 12px / 100% 7px no-repeat; }
.ok { background: #569ae0; border: 1px solid #c9e4fa; border-radius: 1px; padding: 0 3px; line-height: 9px; }
.link { color: #4c67c8; text-decoration: underline; text-shadow: 0 0 1px #dfe6ff; }
.roll { flex-direction: column; font-size: 6.500px; line-height: 7px; font-style: italic; }
.roll b { color: #202020; text-shadow: none; background: #aab4bb; font-style: normal; }
.ab { background: #f4f6f7; color: #48555e; text-shadow: none; padding: 0 2px; line-height: 10px; font-weight: normal; }
.num .ic { margin: 0; }
.num b { position: absolute; left: 0; right: 0; top: 6px; text-align: center; line-height: 12px; color: #4d4d51; text-shadow: none; font-size: 11px; font-weight: normal; }
.oval b { top: 4px; font-size: 7.500px; color: #5d5998; }
.dyn b { top: 6px; font-size: 8px; background: #716c30; color: #ffec4b; line-height: 7px; }
.ess b { top: 4px; font-size: 9px; font-weight: bold; color: #e05138; }
.fx b { top: 4px; color: #fff; font-size: 12px; font-weight: bold; }
.pct { flex-direction: column; font-size: 7px; line-height: 8px; color: #2c5037; text-shadow: none; font-weight: normal; }
.pct b { width: 15px; height: 6px; background: linear-gradient(90deg, #7ccb73 70%, #eff5ee 70%); border: 1px solid #edf5ed; }
.cgi { font: italic bold 12px "Liberation Serif", serif; text-shadow: 0 0 2px #fff, 0 0 2px #fff, 1px 0 1px #fff; color: #222; }
.hr { font-size: 7px; color: #38434c; text-shadow: none; font-weight: normal; text-decoration: line-through; }

.main { flex: 1; min-height: 0; display: flex; }
.left { width: 1192px; flex: none; display: flex; flex-direction: column; }
.tabs { height: 18px; flex: none; background: #d2d2d2; border-bottom: 1px solid #888; display: flex; align-items: flex-end; font-size: 9px; color: #333; }
.tabs span { padding: 2px 11px 0; height: 14px; line-height: 13px; margin-left: 0; letter-spacing: -.2px; }
.tabs .on { background: #efefef; height: 16px; padding: 2px 7px 0 9px; margin-right: 1px; font-weight: 600; width: 36px; line-height: 12px; }
.canvas { flex: none; height: 574px; background: #fff; position: relative; overflow: hidden; border-left: 1px solid #999; font-family: "Liberation Sans", Arial, sans-serif; font-size: 10.200px; }
.sheet { position: absolute; left: 204px; top: 0; width: 780px; height: 477px; border: solid #222; border-width: 0 1.500px 1px 1px; box-shadow: 1px 1px 1px #bbb; }
.t { position: absolute; line-height: 12px; white-space: nowrap; color: #626262; }
.mark { position: absolute; width: 6px; height: 6px; background: #e3f457; border: 1px solid #b1bc79; }
.m1 { left: 218px; top: 12px; } .m2 { left: 336px; top: 12px; } .m3 { left: 432px; top: 12px; }
.m4 { left: 519px; top: 16px; } .m5 { left: 721px; top: 16px; } .m6 { left: 807px; top: 17px; } .m7 { left: 888px; top: 17px; }
.nav1 { left: 231px; top: 20px; color: #8c8c8c; letter-spacing: -.13px; } .nav2 { left: 349px; top: 20px; color: #8c8c8c; letter-spacing: -.13px; } .nav3 { left: 445px; top: 20px; color: #8c8c8c; letter-spacing: -.2px; }
.search { position: absolute; left: 523px; top: 17px; width: 192px; height: 15px; border: 1px solid #ccc; border-top-color: #777; border-left: 1.500px solid #666; }
.buscar { position: absolute; left: 721px; top: 16px; width: 63px; height: 19px; border: 1px solid #aaa; border-radius: 2px; background: linear-gradient(#e6e6e6, #cfcfcf); text-align: center; line-height: 17px; color: #666; }
a.t { color: #1c4677; text-decoration: underline; }
.l1 { left: 807px; top: 19px; width: 59px; letter-spacing: .1px; }
.l2 { left: 888px; top: 20px; letter-spacing: -.2px; } .l3 { left: 890px; top: 19px; }
.strip { position: absolute; left: 245px; top: 101px; width: 721px; height: 30px; background: #f2f2f2; }
.s1 { left: 249px; top: 109px; letter-spacing: -.1px; } .s2 { left: 513px; top: 109px; letter-spacing: -.1px; } .s3 { left: 563px; top: 109px; letter-spacing: -.1px; } .s4 { left: 726px; top: 109px; } .s5 { left: 777px; top: 109px; letter-spacing: -.2px; } .s6 { left: 838px; top: 109px; letter-spacing: -.1px; } .s7 { left: 888px; top: 109px; letter-spacing: -.15px; }
.redpin { position: absolute; left: 600px; top: 120px; width: 8px; height: 12px; }
.sel { position: absolute; left: 330px; top: 216px; width: 200px; height: 22px; padding: 3px 3px 3px 1px; background: repeating-linear-gradient(135deg, #7fb6e2 0 1px, #fff 1px 2.500px); }
.sel span { display: block; height: 16px; line-height: 17px; background: #fff; color: #666; padding-left: 0; margin-right: -20px; letter-spacing: -.1px; }
.handles { position: absolute; left: 328px; top: 214px; width: 200px; height: 26px; }

.docs { height: 33px; flex: none; background: linear-gradient(#0c2c66, #02215a 45%, #021b4b); border-top: 1px solid #667; display: flex; align-items: flex-start; padding-top: 3px; color: #e9edf4; font-size: 9px; position: relative; }
.doc { height: 19px; border: 1px solid #7890b8; background: linear-gradient(#405d90, #173768); display: flex; align-items: center; padding: 0 5px; gap: 5px; }
.doc b { font-size: 11px; line-height: 12px; }
.doc.first { width: 60px; height: 23px; margin: -1px 4px 0 0; border-left: 0; padding: 0 4px 0 6px; justify-content: space-between; background: linear-gradient(#53669e, #2b3f72); gap: 2px; box-shadow: none; }
.doc .pp { font: bold 13px "Liberation Serif", serif; }
.doc .pn { width: 11px; height: 9px; flex: none; } .doc .pi { width: 11px; height: 12px; flex: none; }
.bars { width: 3px; height: 10px; border: solid #7386ac; border-width: 0 1px; }
.d1 { width: 133px; gap: 4px; padding: 0 4px 0 3px; } .d1 span { letter-spacing: .1px; } .d1 b { margin-left: auto; }
.d2 { width: 95px; margin-left: 1px; padding: 0 3px; justify-content: space-between; gap: 2px; }
.d3 { width: 123px; margin-left: 1px; padding: 0 4px 0 0; justify-content: space-between; }
.cur { width: 87px; height: 17px; background: linear-gradient(#91c6e9, #609bca); color: #12284a; font-weight: bold; display: flex; align-items: center; gap: 2px; padding-left: 3px; font-size: 8.800px; }
.cur span { letter-spacing: -.1px; }
.cur b { color: #dce9f3; margin-left: 2px; }
.chev { width: 10px; height: 8px; margin-left: auto; margin-right: 7px; margin-top: 4px; }
.status { flex: 1; background: #8b9098; }
.splitdots { position: absolute; left: 555px; top: 711px; width: 80px; height: 3px; background: radial-gradient(circle, #8a9ab8 .8px, transparent 1px) 0 0 / 3px 3px; }
.sidedots { position: absolute; left: 1193px; top: 448px; width: 3px; height: 80px; background: radial-gradient(circle, #7587aa .8px, transparent 1px) 0 0 / 3px 3px; }

.right { flex: 1; padding: 3px 0 0 5px; display: flex; flex-direction: column; gap: 7px; min-width: 0; overflow: hidden; font-family: "Open Sans", sans-serif; }
.panel { background: #858585; border: 1px solid #5c6c85; border-right: 0; border-radius: 3px 0 0 0; padding: 14px 0 0 3px; flex: none; overflow: hidden; }
.explorer { height: 397px; }
.find { height: 25px; display: flex; align-items: flex-start; gap: 5px; background: #dedede; padding-top: 1px; }
.find svg { width: 15px; height: 15px; border: 1px solid #aebfd2; background: #e5f0fa; flex: none; }
.find span { flex: 1; height: 16px; border: 1px solid #b6b6b6; background: #fff; font: italic 9px/14px "Open Sans", sans-serif; color: #777; padding-left: 1px; }
.tree { background: #fff; height: 330px; overflow: hidden; border-left: 1px solid #aaa; }
.tree p { height: 12.670px; display: flex; align-items: center; font-size: 8.900px; white-space: nowrap; padding-left: 13px; color: #333; }
.tree i { font: normal 7px/10px "DejaVu Sans", sans-serif; width: 14px; flex: none; padding-left: 2px; color: #777; }
.tree svg { width: 11px; height: 11px; flex: none; margin-right: 8px; }
.tree .k2 { padding-left: 26px; }
.tree .on { background: linear-gradient(#e3f0fe, #bcd5f4); border: 1px solid #a6c8ee; padding-left: 12px; color: #355f9a; }
.tree .wide svg { width: 14px; margin-right: 8px; }
.tree .xml svg { width: 14px; margin: 0 6.500px 0 -1.500px; }
.ptabs { height: 23px; display: flex; align-items: center; gap: 12px; }
.ptabs .on { width: 23px; height: 22px; background: #dcdcdc; border-bottom: 1px solid #9dc8ec; display: flex; align-items: center; justify-content: center; margin-right: -5px; }
.ptabs svg { width: 14px; height: 14px; flex: none; } .ptabs .on svg { width: 19px; height: 18px; }
.errors { height: 178px; }
.etools { height: 21px; background: #dadada; display: flex; align-items: center; padding-left: 1px; }
.etools span { width: 24px; height: 20px; display: flex; align-items: center; justify-content: center; flex: none; }
.etools .inf { width: 25px; }
.etools .y { background: #efbf5b; width: 22px; } .etools .y:last-child { width: 40px; justify-content: flex-start; padding-left: 3px; }
.etools i { width: 1.500px; height: 16px; background: #333; margin-left: 2px; flex: none; }
.etools svg { width: 15px; height: 15px; flex: none; }
.ehead { height: 19px; line-height: 18px; padding-left: 14px; background: linear-gradient(#f1f1f1, #dedede); border: 1px solid #bbb; font-size: 8.900px; letter-spacing: -.1px; white-space: nowrap; color: #333; }
.elist { background: #fff; height: 80px; padding-top: 1px; overflow: hidden; border-left: 1px solid #bbb; }
.elist p { height: 12.800px; display: flex; align-items: center; padding-left: 26px; color: #e02834; white-space: nowrap; font-size: 8.700px; font-weight: 600; letter-spacing: 0; }
.elist .alt { background: #f3f3f3; }
.elist svg { width: 12px; height: 12px; margin-right: 6px; flex: none; overflow: hidden; } .elist s { width: 18px; flex: none; }
.hscroll { height: 14px; background: linear-gradient(#eee, #ccc); border-top: 1px solid #aaa; margin-bottom: 2px; }
.hscroll b { display: block; width: 15px; background: #f0f0f0; text-align: center; line-height: 12px; font-size: 11px; }
.project { height: 60px; }
.prow { background: #e4e4e4; height: 46px; padding: 5px 0 0 8px; font-size: 9px; line-height: 21px; white-space: nowrap; box-shadow: inset 4px 4px 0 #efefef; }
.prow span { display: inline-block; border: 1px solid #c4c4c4; border-right: 0; background: #eee; padding: 0 4px; width: 50px; margin-left: 5px; font-size: 7.500px; }

.dialog { position: absolute; left: 522px; top: 256px; width: 473px; height: 371px; border: 2px solid #4c4c4c; border-top-width: 1px; background: #333; display: flex; flex-direction: column; box-shadow: 0 0 1px #888; }
.dialog header { height: 37px; flex: none; background: linear-gradient(#454545, #292929); border-bottom: 1.500px solid #a87f1d; position: relative; display: flex; color: #ddd; }
.waves { position: absolute; left: 0; top: 0; width: 100%; height: 35px; }
.dialog h1 { position: relative; font: 20px/26px "Open Sans", sans-serif; padding: 9px 0 0 8px; white-space: nowrap; letter-spacing: .35px; -webkit-text-stroke: .25px #ddd; }
.wbtn { position: absolute; right: 5px; top: 0; display: flex; }
.wbtn span { width: 20px; height: 12px; background: linear-gradient(#777, #3c3c3c); border: 1px solid #777; border-top: 0; display: flex; align-items: center; justify-content: center; }
.wbtn i { width: 8px; height: 6px; border: 1.500px solid #ddd; background: #333; }
.wbtn .close { width: 30px; background: linear-gradient(#c93a3f, #a2141c); border-color: #b6474a; color: #fff; font: bold 11px/9px "Open Sans", sans-serif; padding-bottom: 2px; }
.lock { position: absolute; right: 5px; top: 17px; width: 17px; height: 17px; }
.dbody { flex: 1; display: flex; min-height: 0; background: #ececec; }
.side { width: 81px; flex: none; padding-top: 4px; background: linear-gradient(90deg, #333, #3a3a3a 80%, #2b2b2b); color: #d5d5d5; }
.side li { height: 36.500px; border-bottom: 1px solid #606060; display: flex; align-items: center; gap: 5px; padding-left: 4px; font-size: 9px; letter-spacing: -.1px; }
.side svg { width: 20px; height: 20px; flex: none; }
.side li:last-child { border: 0; }
.side .gui { gap: 2px; } .side .bright { color: #fff; font-weight: 600; }
.side .on { width: 86px; position: relative; border: 0; background: linear-gradient(#ffab4b, #ff9b30 15%, #f98a1d 70%, #ff7f08); clip-path: polygon(0 0, 93% 0, 100% 50%, 93% 100%, 0 100%); color: #5c3b16; gap: 4px; padding: 0 0 1px 3px; }
.form { flex: 1; padding: 9px 10px 0 11px; font-size: 8.800px; color: #333; min-width: 0; }
.name, .type, .mask { display: flex; align-items: center; }
.name { height: 16px; } .name label, .type label { width: 28px; flex: none; }
.inp { flex: 1; height: 16px; border: 1px solid #a9c5e8; background: #fff; display: flex; align-items: center; padding-left: 2px; letter-spacing: -.1px; }
.inp i { width: 1px; height: 11px; background: #000; }
.form hr { margin: 6px 0 5px; border: 0; height: 1px; background: #999; }
.form .cap { display: block; height: 13px; line-height: 13px; margin-left: -2px; }
.capbox { margin-left: -1px; height: 100px; border: 1px solid #b5b9c4; background: #fff; padding-left: 0; }
.lang { background: #c5dcf8; height: 13px; display: flex; align-items: center; justify-content: center; gap: 6px; padding-right: 37px; color: #555; }
.lang svg { width: 14px; height: 9px; }
.capbox p { padding: 1px 0 0 1px; line-height: 13px; }
.type { margin-top: 5px; height: 19px; }
.drop { height: 19px; width: 202px; border: 1px solid #b4b4b4; border-radius: 2px; background: linear-gradient(#eaeaea, #dadada); display: flex; align-items: center; box-shadow: 0 1px 1px #bbb; font-size: 9px; padding-left: 3px; }
.drop em { color: #4a80bd; font-size: 7px; font-weight: bold; text-decoration: line-through; margin-right: 2px; }
.drop b { margin-left: auto; width: 12px; height: 100%; border-left: 1px solid #bbb; display: flex; align-items: center; justify-content: center; }
.mask { margin-top: 13px; height: 17px; } .mask label { width: 112px; }
.mask .drop { width: 197px; height: 15px; padding: 0; font-size: 8px; } .mask .drop span { background: #fff; flex: 1; height: 13px; line-height: 12px; padding-left: 3px; }
.mb { width: 19px; height: 15px; border: 1px solid #aaa; border-radius: 2px; margin-left: 6px; display: flex; align-items: center; justify-content: center; background: #e1e1ea; } .mb svg { width: 11px; height: 8px; }
.check { display: flex; align-items: center; height: 15px; gap: 5px; margin-top: 57px; padding-left: 1px; font-size: 8.800px; } .check + .check { margin-top: 0; }
.check i { width: 10px; height: 10px; border: 1px solid #aaa; background: #e5e5e5; font: 10px/9px "DejaVu Sans", sans-serif; color: #666; }
.check.off { color: #a8a8a8; }
.dialog footer { height: 24px; flex: none; background: linear-gradient(#2b2b2b, #3a3a3a); display: flex; align-items: center; padding: 2px 0 0 9px; }
.dialog footer > svg { width: 14px; height: 13px; margin-right: 11px; flex: none; } .dialog footer > svg:nth-child(3) { width: 11px; height: 9px; margin-left: 1px; margin-right: 12px; }
.zero { color: #ccc; font-size: 9px; width: 12px; border-right: 1px solid #555; margin-left: 2px; line-height: 12px; }
.opt { width: 108px; height: 21px; margin-left: 36px; background: #c8c8c8; color: #333; font-size: 8.600px; line-height: 9.500px; text-align: center; white-space: nowrap; letter-spacing: -.02px; margin-right: 77px; padding-top: 1px; flex: none; }
.btn { width: 37px; height: 17px; flex: none; border: 1px solid #888; background: linear-gradient(#666, #333 50%, #4b4b4b); display: flex; align-items: center; justify-content: center; } .btn svg { width: 16px; height: 12px; }
.ok2 { width: 34px; height: 29px; border: 2px solid #39b1ac; border-radius: 2px; background: linear-gradient(#b8df60, #5bb71e 55%, #8bd02b); } .ok2 svg { width: 18px; height: 18px; }
.dialog footer > .rs { width: 9px; height: 9px; margin: 8px 0 0 7px; }
.tip { position: absolute; left: 164px; top: 63px; width: 138px; height: 28px; border: 1px solid #777; border-radius: 1px; background: linear-gradient(#fff, #e7e7f0); box-shadow: 2px 2px 2px rgba(0,0,0,.45); font-size: 8.800px; line-height: 12px; padding: 1px 0 0 1px; color: #555; white-space: nowrap; letter-spacing: .18px; }
.ibeam { position: absolute; left: 162px; top: 51px; width: 8px; height: 13px; }
```
